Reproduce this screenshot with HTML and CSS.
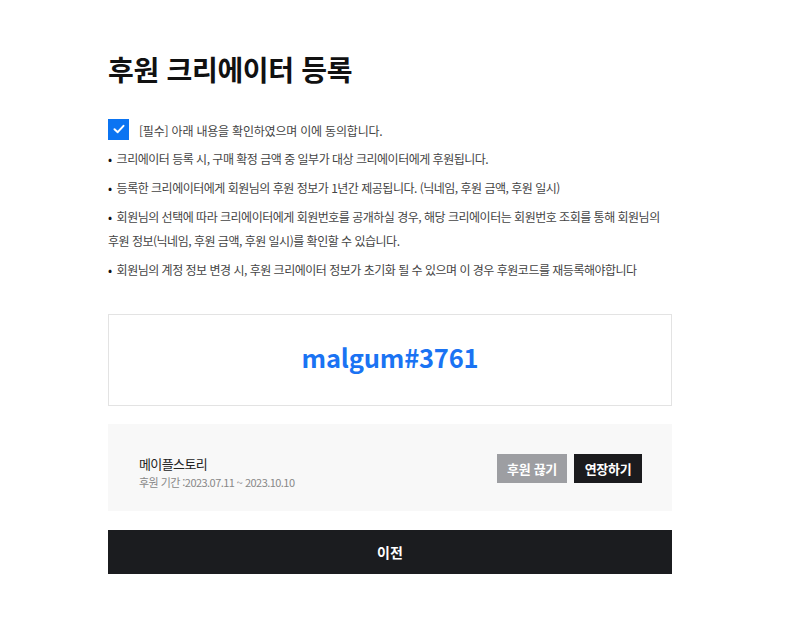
FILE: index.html
```html
<!DOCTYPE html>
<html lang="ko">
<head>
<meta charset="utf-8">
<title>후원 크리에이터 등록</title>
<link rel="stylesheet" href="styles.css">
</head>
<body>
<main class="page">
  <h1 class="title">후원 크리에이터 등록</h1>
  <label class="agree">
    <span class="checkbox">
      <svg width="14" height="14" viewBox="0 0 14 14"><path d="M2.5 7.2 L5.7 10.2 L11.5 3.8" fill="none" stroke="#fff" stroke-width="2" stroke-linecap="round" stroke-linejoin="round"/></svg>
    </span>
    <span class="agree-text">[필수] 아래 내용을 확인하였으며 이에 동의합니다.</span>
  </label>
  <ul class="notes">
    <li>크리에이터 등록 시, 구매 확정 금액 중 일부가 대상 크리에이터에게 후원됩니다.</li>
    <li>등록한 크리에이터에게 회원님의 후원 정보가 1년간 제공됩니다. (닉네임, 후원 금액, 후원 일시)</li>
    <li>회원님의 선택에 따라 크리에이터에게 회원번호를 공개하실 경우, 해당 크리에이터는 회원번호 조회를 통해 회원님의 후원 정보(닉네임, 후원 금액, 후원 일시)를 확인할 수 있습니다.</li>
    <li>회원님의 계정 정보 변경 시, 후원 크리에이터 정보가 초기화 될 수 있으며 이 경우 후원코드를 재등록해야합니다</li>
  </ul>
  <div class="code-box">malgum#3761</div>
  <div class="panel">
    <div class="panel-info">
      <div class="panel-name">메이플스토리</div>
      <div class="panel-period">후원 기간 :2023.07.11 ~ 2023.10.10</div>
    </div>
    <div class="panel-actions">
      <button class="btn btn-gray">후원 끊기</button>
      <button class="btn btn-dark">연장하기</button>
    </div>
  </div>
  <button class="prev">이전</button>
</main>
</body>
</html>
```

FILE: styles.css
```css
* { box-sizing: border-box; }
body {
  margin: 0;
  background: #fff;
  font-family: "Noto Sans CJK KR", "Noto Sans", sans-serif;
  color: #333;
}
.page {
  width: 564px;
  margin-left: 108px;
  padding-top: 48px;
  padding-bottom: 40px;
}
.title {
  margin: 0;
  font-size: 28px;
  line-height: 42px;
  font-weight: 700;
  color: #111;
  letter-spacing: -0.3px;
}
.agree {
  display: flex;
  align-items: center;
  margin-top: 28px;
  height: 22px;
}
.checkbox {
  width: 21px;
  height: 21px;
  background: #0b74f2;
  display: flex;
  align-items: center;
  justify-content: center;
  flex: none;
}
.agree-text {
  margin-left: 10px;
  font-size: 12px;
  line-height: 22px;
  color: #444;
  padding-top: 4px;
  letter-spacing: -0.2px;
}
.notes {
  list-style: none;
  margin: 7px 0 0;
  padding: 0;
}
.notes li {
  font-size: 12px;
  line-height: 24px;
  color: #444;
  margin-bottom: 5px;
  letter-spacing: -0.5px;
}
.notes li::before {
  content: "•";
  color: #111;
  margin-right: 5px;
}
.code-box {
  margin-top: 32px;
  height: 92px;
  border: 1px solid #e3e3e3;
  display: flex;
  align-items: center;
  justify-content: center;
  padding-bottom: 7px;
  font-size: 25.5px;
  font-weight: 700;
  color: #1a73f3;
  letter-spacing: -0.2px;
}
.panel {
  margin-top: 18px;
  height: 87px;
  background: #f8f8f8;
  display: flex;
  justify-content: space-between;
  align-items: flex-start;
  padding: 30px 30px 0 31px;
}
.panel-info {
  margin-top: 1px;
}
.panel-name {
  font-size: 13px;
  line-height: 18px;
  color: #222;
  letter-spacing: -0.6px;
}
.panel-period {
  font-size: 11px;
  line-height: 18px;
  color: #888;
  letter-spacing: -0.55px;
}
.panel-actions {
  display: flex;
  gap: 7px;
}
.btn {
  height: 29px;
  border: none;
  font-family: inherit;
  font-size: 13px;
  font-weight: 700;
  color: #fff;
  padding: 0;
  letter-spacing: -0.3px;
}
.btn-gray {
  width: 70px;
  background: #9d9ea2;
}
.btn-dark {
  width: 68px;
  background: #1b1b1e;
}
.prev {
  display: block;
  width: 100%;
  margin-top: 19px;
  height: 44px;
  border: none;
  background: #1b1c1f;
  color: #fff;
  font-family: inherit;
  font-size: 14px;
  font-weight: 700;
}
```
